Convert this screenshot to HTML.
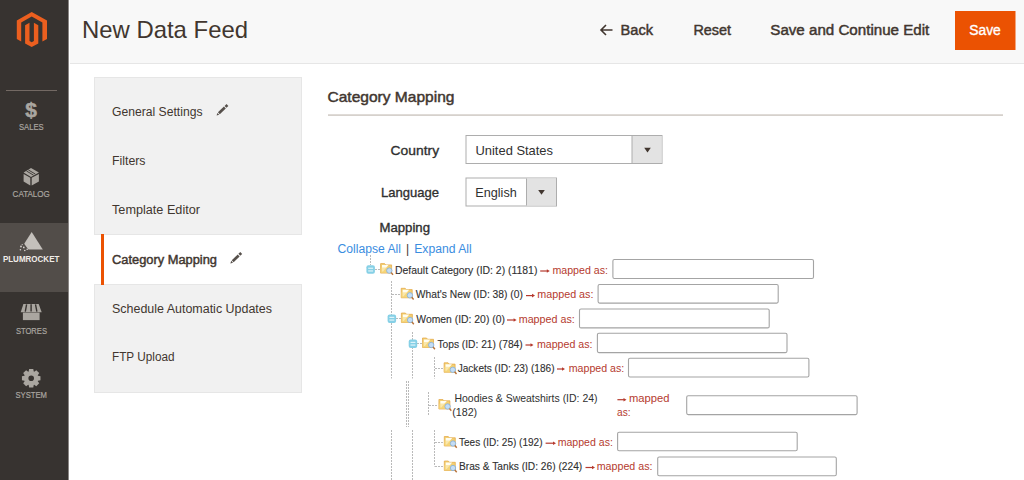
<!DOCTYPE html>
<html><head><meta charset="utf-8"><style>
html,body{margin:0;padding:0;width:1024px;height:480px;overflow:hidden;background:#fff}
svg{display:block}
text{font-family:"Liberation Sans", sans-serif}
</style></head><body>
<svg width="1024" height="480" viewBox="0 0 1024 480">
<rect x="0" y="0" width="1024" height="480" fill="#ffffff"/>
<rect x="70" y="0" width="954" height="63" fill="#f8f8f8"/>
<rect x="70" y="63" width="954" height="1" fill="#e6e6e6"/>
<rect x="0" y="0" width="68" height="480" fill="#373330"/>
<rect x="68" y="0" width="1" height="480" fill="#8a8684"/>
<rect x="0" y="223" width="68" height="69" fill="#524d49"/>
<rect x="6" y="90" width="51" height="1" fill="#736963"/>
<path fill="#eb5f1f" d="M31.7,11.9 L47,20.5 L47,39 L42.4,41.5 L42.4,22.6 L31.7,16.6 L21.2,22.6 L21.2,41.5 L16.8,39 L16.8,20.5 Z"/>
<path fill="#eb5f1f" d="M25.1,25.2 L29.5,22.7 L29.5,41 L31.7,42.3 L33.9,41 L33.9,22.7 L38.3,25.2 L38.3,43.5 L31.7,47 L25.1,43.5 Z"/>
<text x="25.2" y="116.5" font-size="21" font-weight="700" fill="#aaa6a0" stroke="#aaa6a0" stroke-width="0.5">$</text>
<text x="19" y="129.9" font-size="9.5" font-weight="400" fill="#aaa6a0" textLength="24.6" lengthAdjust="spacingAndGlyphs" stroke="#aaa6a0" stroke-width="0.2">SALES</text>
<path fill="#aaa6a0" d="M31,167.9 L38.9,172.6 L31,177 L23.6,172.6 Z"/>
<path fill="#aaa6a0" d="M23.6,174 L30.3,177.8 L30.3,185.4 L23.6,181.5 Z"/>
<path fill="#aaa6a0" d="M38.9,174 L31.7,177.8 L31.7,185.4 L38.9,181.5 Z"/>
<path stroke="#373330" stroke-width="0.9" fill="none" d="M26.5,171 L33.6,175.2 M28.3,169.9 L35.4,174.1"/>
<text x="12.6" y="196.7" font-size="9.5" font-weight="400" fill="#aaa6a0" textLength="37.2" lengthAdjust="spacingAndGlyphs" stroke="#aaa6a0" stroke-width="0.2">CATALOG</text>
<path fill="#c4c0bb" d="M31.7,232.1 L42.8,249.6 L28.5,249.6 L26.5,247 L24.2,243.8 Z"/>
<circle cx="21" cy="246.5" r="0.9" fill="#d6d2ce"/>
<circle cx="23.8" cy="247.4" r="0.85" fill="#d6d2ce"/>
<circle cx="20.4" cy="249.7" r="0.8" fill="#d6d2ce"/>
<circle cx="24.8" cy="250.5" r="0.8" fill="#d6d2ce"/>
<circle cx="27.2" cy="249.2" r="0.8" fill="#d6d2ce"/>
<circle cx="22.2" cy="244.6" r="0.6" fill="#d6d2ce"/>
<text x="2.9" y="262.3" font-size="9.5" font-weight="700" fill="#f0ece8" textLength="56.5" lengthAdjust="spacingAndGlyphs">PLUMROCKET</text>
<path fill="#aaa6a0" d="M23.4,303.9 L38.7,303.9 L41.7,312.2 L20.7,312.2 Z"/>
<path stroke="#373330" stroke-width="1.4" d="M26.6,304.3 L25.3,311.6 M31.1,304.3 L31.1,311.6 M35.5,304.3 L36.9,311.6"/>
<rect x="22.9" y="312.6" width="16.7" height="7.5" fill="#aaa6a0"/>
<text x="15.9" y="333.6" font-size="9.5" font-weight="400" fill="#aaa6a0" textLength="31.1" lengthAdjust="spacingAndGlyphs" stroke="#aaa6a0" stroke-width="0.2">STORES</text>
<path fill="#aaa6a0" fill-rule="evenodd" d="M37.94,375.66 L40.47,376.13 L40.47,380.27 L37.94,380.74 L37.76,381.17 L39.22,383.29 L36.29,386.22 L34.17,384.76 L33.74,384.94 L33.27,387.47 L29.13,387.47 L28.66,384.94 L28.23,384.76 L26.11,386.22 L23.18,383.29 L24.64,381.17 L24.46,380.74 L21.93,380.27 L21.93,376.13 L24.46,375.66 L24.64,375.23 L23.18,373.11 L26.11,370.18 L28.23,371.64 L28.66,371.46 L29.13,368.93 L33.27,368.93 L33.74,371.46 L34.17,371.64 L36.29,370.18 L39.22,373.11 L37.76,375.23 Z M34.0,378.2 A2.8,2.8 0 1 0 28.4,378.2 A2.8,2.8 0 1 0 34.0,378.2 Z"/>
<text x="15.5" y="398.3" font-size="9.5" font-weight="400" fill="#aaa6a0" textLength="31.5" lengthAdjust="spacingAndGlyphs" stroke="#aaa6a0" stroke-width="0.2">SYSTEM</text>
<text x="82" y="37.9" font-size="24" font-weight="400" fill="#41362f" textLength="166" lengthAdjust="spacingAndGlyphs">New Data Feed</text>
<path stroke="#41362f" stroke-width="1.6" fill="none" d="M612.5,30 L601,30 M606,25 L601,30 L606,35"/>
<text x="620.5" y="35" font-size="14" font-weight="400" fill="#41362f" textLength="32.5" lengthAdjust="spacingAndGlyphs" stroke="#41362f" stroke-width="0.45">Back</text>
<text x="693.5" y="35" font-size="14" font-weight="400" fill="#41362f" textLength="37.5" lengthAdjust="spacingAndGlyphs" stroke="#41362f" stroke-width="0.45">Reset</text>
<text x="770.3" y="35" font-size="14" font-weight="400" fill="#41362f" textLength="159" lengthAdjust="spacingAndGlyphs" stroke="#41362f" stroke-width="0.45">Save and Continue Edit</text>
<rect x="955" y="11" width="60.5" height="39" fill="#eb5202"/>
<text x="969.3" y="35" font-size="14" font-weight="400" fill="#ffffff" textLength="31.5" lengthAdjust="spacingAndGlyphs" stroke="#ffffff" stroke-width="0.35">Save</text>
<rect x="94.5" y="77.5" width="207" height="157" fill="#f1f1f1" stroke="#e6e6e6"/>
<rect x="94.5" y="284.5" width="207" height="108" fill="#f1f1f1" stroke="#e6e6e6"/>
<rect x="101" y="234" width="3" height="51" fill="#eb5202"/>
<text x="112" y="115.8" font-size="12.5" font-weight="400" fill="#41362f" textLength="90.5" lengthAdjust="spacingAndGlyphs">General Settings</text>
<text x="112" y="164.7" font-size="12.5" font-weight="400" fill="#41362f" textLength="33.5" lengthAdjust="spacingAndGlyphs">Filters</text>
<text x="112" y="214" font-size="12.5" font-weight="400" fill="#41362f" textLength="88" lengthAdjust="spacingAndGlyphs">Template Editor</text>
<text x="112" y="263.7" font-size="12.5" font-weight="400" fill="#41362f" textLength="105" lengthAdjust="spacingAndGlyphs" stroke="#41362f" stroke-width="0.45">Category Mapping</text>
<text x="112" y="313" font-size="12.5" font-weight="400" fill="#41362f" textLength="160" lengthAdjust="spacingAndGlyphs">Schedule Automatic Updates</text>
<text x="112" y="361.2" font-size="12.5" font-weight="400" fill="#41362f" textLength="62.5" lengthAdjust="spacingAndGlyphs">FTP Upload</text>
<g transform="translate(216.8,115.3) rotate(-44)" fill="#56504b"><path d="M-0.3,0 L2.1,-1.3 L2.1,1.3 Z"/><rect x="2.9" y="-1.35" width="8.3" height="2.7"/><rect x="12.1" y="-1.35" width="2.7" height="2.7"/></g>
<g transform="translate(230.6,263.2) rotate(-44)" fill="#56504b"><path d="M-0.3,0 L2.1,-1.3 L2.1,1.3 Z"/><rect x="2.9" y="-1.35" width="8.3" height="2.7"/><rect x="12.1" y="-1.35" width="2.7" height="2.7"/></g>
<text x="327.5" y="101.7" font-size="14.5" font-weight="400" fill="#41362f" textLength="127" lengthAdjust="spacingAndGlyphs" stroke="#41362f" stroke-width="0.45">Category Mapping</text>
<rect x="328" y="114.3" width="675" height="1.6" fill="#d2ccc7"/>
<text x="390.6" y="154.7" font-size="13.5" font-weight="400" fill="#303030" textLength="48.5" lengthAdjust="spacingAndGlyphs" stroke="#303030" stroke-width="0.35">Country</text>
<rect x="466" y="135.5" width="196" height="28" fill="#fff" stroke="#adadad"/>
<rect x="632" y="136" width="29.5" height="27" fill="#e3e3e3"/>
<rect x="631.5" y="136" width="1" height="27" fill="#adadad"/>
<path fill="#41362f" d="M644.2,147.7 L650.8,147.7 L647.5,152.5 Z"/>
<text x="475.5" y="154.7" font-size="13.3" font-weight="400" fill="#303030" textLength="77.5" lengthAdjust="spacingAndGlyphs">United States</text>
<text x="381" y="197.1" font-size="13.5" font-weight="400" fill="#303030" textLength="58" lengthAdjust="spacingAndGlyphs" stroke="#303030" stroke-width="0.35">Language</text>
<rect x="466" y="178" width="90.5" height="28" fill="#fff" stroke="#adadad"/>
<rect x="526.5" y="178.5" width="29.5" height="27" fill="#e3e3e3"/>
<rect x="526" y="178.5" width="1" height="27" fill="#adadad"/>
<path fill="#41362f" d="M538.2,190 L544.8,190 L541.5,194.8 Z"/>
<text x="475.3" y="197.1" font-size="13.3" font-weight="400" fill="#303030" textLength="41.5" lengthAdjust="spacingAndGlyphs">English</text>
<text x="379.5" y="232" font-size="12" font-weight="400" fill="#303030" textLength="50.5" lengthAdjust="spacingAndGlyphs" stroke="#303030" stroke-width="0.35">Mapping</text>
<text x="337.5" y="252.5" font-size="12" font-weight="400" fill="#3a8ddf" textLength="63.5" lengthAdjust="spacingAndGlyphs">Collapse All</text>
<text x="406" y="252.5" font-size="12" font-weight="400" fill="#41362f">|</text>
<text x="414.2" y="252.5" font-size="12" font-weight="400" fill="#3a8ddf" textLength="57.5" lengthAdjust="spacingAndGlyphs">Expand All</text>
<line x1="370.5" y1="255" x2="370.5" y2="265" stroke="#bababa" stroke-width="1" stroke-dasharray="2,1"/>
<line x1="391.5" y1="281" x2="391.5" y2="378.5" stroke="#bababa" stroke-width="1" stroke-dasharray="2,1"/>
<line x1="391.5" y1="430" x2="391.5" y2="480" stroke="#bababa" stroke-width="1" stroke-dasharray="2,1"/>
<line x1="412.5" y1="332" x2="412.5" y2="378.5" stroke="#bababa" stroke-width="1" stroke-dasharray="2,1"/>
<line x1="412.5" y1="430" x2="412.5" y2="480" stroke="#bababa" stroke-width="1" stroke-dasharray="2,1"/>
<line x1="434.5" y1="357" x2="434.5" y2="378.5" stroke="#bababa" stroke-width="1" stroke-dasharray="2,1"/>
<line x1="434.5" y1="430" x2="434.5" y2="466.5" stroke="#bababa" stroke-width="1" stroke-dasharray="2,1"/>
<line x1="406.5" y1="381" x2="406.5" y2="427" stroke="#bababa" stroke-width="1" stroke-dasharray="2,1"/>
<line x1="408.5" y1="381" x2="408.5" y2="427" stroke="#bababa" stroke-width="1" stroke-dasharray="2,1"/>
<line x1="428.5" y1="392" x2="428.5" y2="415" stroke="#bababa" stroke-width="1" stroke-dasharray="2,1"/>
<line x1="375" y1="269.5" x2="380" y2="269.5" stroke="#bababa" stroke-width="1" stroke-dasharray="2,1"/>
<line x1="392" y1="294.5" x2="400" y2="294.5" stroke="#bababa" stroke-width="1" stroke-dasharray="2,1"/>
<line x1="396" y1="318.5" x2="401" y2="318.5" stroke="#bababa" stroke-width="1" stroke-dasharray="2,1"/>
<line x1="417" y1="343.5" x2="422" y2="343.5" stroke="#bababa" stroke-width="1" stroke-dasharray="2,1"/>
<line x1="435" y1="368.5" x2="443" y2="368.5" stroke="#bababa" stroke-width="1" stroke-dasharray="2,1"/>
<line x1="429" y1="405.5" x2="438" y2="405.5" stroke="#bababa" stroke-width="1" stroke-dasharray="2,1"/>
<line x1="435" y1="442.5" x2="443" y2="442.5" stroke="#bababa" stroke-width="1" stroke-dasharray="2,1"/>
<line x1="435" y1="466.5" x2="443" y2="466.5" stroke="#bababa" stroke-width="1" stroke-dasharray="2,1"/>
<g transform="translate(366.4,265.3)"><rect x="0" y="0" width="8.5" height="8.5" rx="2" fill="#86d0e6"/><rect x="1.8" y="2.4" width="4.9" height="1.1" fill="#e8f7fb"/><rect x="1.8" y="5.1" width="4.9" height="1.1" fill="#e8f7fb"/></g>
<g transform="translate(380,262.6)"><path d="M0.6,1 h4 l1.2,1.3 h5.8 v8.2 h-11 z" fill="#f3cf72" stroke="#e3a542" stroke-width="0.7"/><path d="M2,2.5 L8.5,2.5 L3,9 L2,9 Z" fill="#fffdf0"/><path d="M0.6,5 h11.2 l-0.3,5.5 h-10.9 z" fill="#f7d97f" opacity="0.6"/><circle cx="9.3" cy="8" r="2.7" fill="#c4ddf5" stroke="#7aa8d8" stroke-width="0.7"/><line x1="11.2" y1="10" x2="13" y2="12.2" stroke="#b8733a" stroke-width="1.4"/></g>
<text x="395.0" y="273.7" font-size="11.4" fill="#303030" stroke="#303030" stroke-width="0.12" textLength="142.39999999999998" lengthAdjust="spacingAndGlyphs">Default Category (ID: 2) (1181)</text>
<path d="M540.2,271.0 L547.3,271.0" stroke="#b53a2e" stroke-width="1.2"/><path d="M546.8,269.2 L549.8,271.0 L546.8,272.8 Z" fill="#b53a2e"/>
<text x="552.4" y="273.7" font-size="11.4" fill="#b53a2e" textLength="55.60000000000002" lengthAdjust="spacingAndGlyphs">mapped as:</text>
<rect x="612.9" y="259.5" width="200.60000000000002" height="19" rx="1.5" fill="#fff" stroke="#a4a4a4" stroke-width="1.1"/>
<g transform="translate(400.6,287.3)"><path d="M0.6,1 h4 l1.2,1.3 h5.8 v8.2 h-11 z" fill="#f3cf72" stroke="#e3a542" stroke-width="0.7"/><path d="M2,2.5 L8.5,2.5 L3,9 L2,9 Z" fill="#fffdf0"/><path d="M0.6,5 h11.2 l-0.3,5.5 h-10.9 z" fill="#f7d97f" opacity="0.6"/><circle cx="9.3" cy="8" r="2.7" fill="#c4ddf5" stroke="#7aa8d8" stroke-width="0.7"/><line x1="11.2" y1="10" x2="13" y2="12.2" stroke="#b8733a" stroke-width="1.4"/></g>
<text x="415.8" y="298.3" font-size="11.4" fill="#303030" stroke="#303030" stroke-width="0.12" textLength="107.09999999999997" lengthAdjust="spacingAndGlyphs">What's New (ID: 38) (0)</text>
<path d="M526,295.6 L532.5,295.6" stroke="#b53a2e" stroke-width="1.2"/><path d="M532,293.8 L535,295.6 L532,297.40000000000003 Z" fill="#b53a2e"/>
<text x="537.2" y="298.3" font-size="11.4" fill="#b53a2e" textLength="56.299999999999955" lengthAdjust="spacingAndGlyphs">mapped as:</text>
<rect x="598.1" y="284.5" width="180.10000000000002" height="18.600000000000023" rx="1.5" fill="#fff" stroke="#a4a4a4" stroke-width="1.1"/>
<g transform="translate(387.6,314.4)"><rect x="0" y="0" width="8.5" height="8.5" rx="2" fill="#86d0e6"/><rect x="1.8" y="2.4" width="4.9" height="1.1" fill="#e8f7fb"/><rect x="1.8" y="5.1" width="4.9" height="1.1" fill="#e8f7fb"/></g>
<g transform="translate(400.8,312)"><path d="M0.6,1 h4 l1.2,1.3 h5.8 v8.2 h-11 z" fill="#f3cf72" stroke="#e3a542" stroke-width="0.7"/><path d="M2,2.5 L8.5,2.5 L3,9 L2,9 Z" fill="#fffdf0"/><path d="M0.6,5 h11.2 l-0.3,5.5 h-10.9 z" fill="#f7d97f" opacity="0.6"/><circle cx="9.3" cy="8" r="2.7" fill="#c4ddf5" stroke="#7aa8d8" stroke-width="0.7"/><line x1="11.2" y1="10" x2="13" y2="12.2" stroke="#b8733a" stroke-width="1.4"/></g>
<text x="416.3" y="322.7" font-size="11.4" fill="#303030" stroke="#303030" stroke-width="0.12" textLength="88.59999999999997" lengthAdjust="spacingAndGlyphs">Women (ID: 20) (0)</text>
<path d="M507,320.0 L514.1,320.0" stroke="#b53a2e" stroke-width="1.2"/><path d="M513.6,318.2 L516.6,320.0 L513.6,321.8 Z" fill="#b53a2e"/>
<text x="518.7" y="322.7" font-size="11.4" fill="#b53a2e" textLength="56.09999999999991" lengthAdjust="spacingAndGlyphs">mapped as:</text>
<rect x="579.5" y="309.0" width="189.70000000000005" height="18.899999999999977" rx="1.5" fill="#fff" stroke="#a4a4a4" stroke-width="1.1"/>
<g transform="translate(408.7,339.4)"><rect x="0" y="0" width="8.5" height="8.5" rx="2" fill="#86d0e6"/><rect x="1.8" y="2.4" width="4.9" height="1.1" fill="#e8f7fb"/><rect x="1.8" y="5.1" width="4.9" height="1.1" fill="#e8f7fb"/></g>
<g transform="translate(421.9,337)"><path d="M0.6,1 h4 l1.2,1.3 h5.8 v8.2 h-11 z" fill="#f3cf72" stroke="#e3a542" stroke-width="0.7"/><path d="M2,2.5 L8.5,2.5 L3,9 L2,9 Z" fill="#fffdf0"/><path d="M0.6,5 h11.2 l-0.3,5.5 h-10.9 z" fill="#f7d97f" opacity="0.6"/><circle cx="9.3" cy="8" r="2.7" fill="#c4ddf5" stroke="#7aa8d8" stroke-width="0.7"/><line x1="11.2" y1="10" x2="13" y2="12.2" stroke="#b8733a" stroke-width="1.4"/></g>
<text x="437.4" y="347.7" font-size="11.4" fill="#303030" stroke="#303030" stroke-width="0.12" textLength="85.30000000000007" lengthAdjust="spacingAndGlyphs">Tops (ID: 21) (784)</text>
<path d="M525.5,345.0 L531.0,345.0" stroke="#b53a2e" stroke-width="1.2"/><path d="M530.5,343.2 L533.5,345.0 L530.5,346.8 Z" fill="#b53a2e"/>
<text x="536.9" y="347.7" font-size="11.4" fill="#b53a2e" textLength="55.60000000000002" lengthAdjust="spacingAndGlyphs">mapped as:</text>
<rect x="597.4" y="333.3" width="189.60000000000002" height="19.30000000000001" rx="1.5" fill="#fff" stroke="#a4a4a4" stroke-width="1.1"/>
<g transform="translate(443.5,361.8)"><path d="M0.6,1 h4 l1.2,1.3 h5.8 v8.2 h-11 z" fill="#f3cf72" stroke="#e3a542" stroke-width="0.7"/><path d="M2,2.5 L8.5,2.5 L3,9 L2,9 Z" fill="#fffdf0"/><path d="M0.6,5 h11.2 l-0.3,5.5 h-10.9 z" fill="#f7d97f" opacity="0.6"/><circle cx="9.3" cy="8" r="2.7" fill="#c4ddf5" stroke="#7aa8d8" stroke-width="0.7"/><line x1="11.2" y1="10" x2="13" y2="12.2" stroke="#b8733a" stroke-width="1.4"/></g>
<text x="457.7" y="371.7" font-size="11.4" fill="#303030" stroke="#303030" stroke-width="0.12" textLength="96.80000000000001" lengthAdjust="spacingAndGlyphs">Jackets (ID: 23) (186)</text>
<path d="M557,369.0 L562.5,369.0" stroke="#b53a2e" stroke-width="1.2"/><path d="M562,367.2 L565,369.0 L562,370.8 Z" fill="#b53a2e"/>
<text x="568.7" y="371.7" font-size="11.4" fill="#b53a2e" textLength="55.59999999999991" lengthAdjust="spacingAndGlyphs">mapped as:</text>
<rect x="628.5" y="358.3" width="180.39999999999998" height="18.69999999999999" rx="1.5" fill="#fff" stroke="#a4a4a4" stroke-width="1.1"/>
<g transform="translate(443.7,435.5)"><path d="M0.6,1 h4 l1.2,1.3 h5.8 v8.2 h-11 z" fill="#f3cf72" stroke="#e3a542" stroke-width="0.7"/><path d="M2,2.5 L8.5,2.5 L3,9 L2,9 Z" fill="#fffdf0"/><path d="M0.6,5 h11.2 l-0.3,5.5 h-10.9 z" fill="#f7d97f" opacity="0.6"/><circle cx="9.3" cy="8" r="2.7" fill="#c4ddf5" stroke="#7aa8d8" stroke-width="0.7"/><line x1="11.2" y1="10" x2="13" y2="12.2" stroke="#b8733a" stroke-width="1.4"/></g>
<text x="459.0" y="445.9" font-size="11.4" fill="#303030" stroke="#303030" stroke-width="0.12" textLength="83.5" lengthAdjust="spacingAndGlyphs">Tees (ID: 25) (192)</text>
<path d="M545.6,443.2 L553.5,443.2" stroke="#b53a2e" stroke-width="1.2"/><path d="M553,441.4 L556,443.2 L553,445.0 Z" fill="#b53a2e"/>
<text x="557.7" y="445.9" font-size="11.4" fill="#b53a2e" textLength="55.19999999999993" lengthAdjust="spacingAndGlyphs">mapped as:</text>
<rect x="617.6" y="432.2" width="179.60000000000002" height="18.5" rx="1.5" fill="#fff" stroke="#a4a4a4" stroke-width="1.1"/>
<g transform="translate(443.7,460)"><path d="M0.6,1 h4 l1.2,1.3 h5.8 v8.2 h-11 z" fill="#f3cf72" stroke="#e3a542" stroke-width="0.7"/><path d="M2,2.5 L8.5,2.5 L3,9 L2,9 Z" fill="#fffdf0"/><path d="M0.6,5 h11.2 l-0.3,5.5 h-10.9 z" fill="#f7d97f" opacity="0.6"/><circle cx="9.3" cy="8" r="2.7" fill="#c4ddf5" stroke="#7aa8d8" stroke-width="0.7"/><line x1="11.2" y1="10" x2="13" y2="12.2" stroke="#b8733a" stroke-width="1.4"/></g>
<text x="459.0" y="470.2" font-size="11.4" fill="#303030" stroke="#303030" stroke-width="0.12" textLength="123.20000000000005" lengthAdjust="spacingAndGlyphs">Bras &amp; Tanks (ID: 26) (224)</text>
<path d="M585.5,467.5 L592.5,467.5" stroke="#b53a2e" stroke-width="1.2"/><path d="M592,465.7 L595,467.5 L592,469.3 Z" fill="#b53a2e"/>
<text x="596.7" y="470.2" font-size="11.4" fill="#b53a2e" textLength="55.799999999999955" lengthAdjust="spacingAndGlyphs">mapped as:</text>
<rect x="657.7" y="457.0" width="178.5999999999999" height="18.69999999999999" rx="1.5" fill="#fff" stroke="#a4a4a4" stroke-width="1.1"/>
<g transform="translate(438.3,398.5)"><path d="M0.6,1 h4 l1.2,1.3 h5.8 v8.2 h-11 z" fill="#f3cf72" stroke="#e3a542" stroke-width="0.7"/><path d="M2,2.5 L8.5,2.5 L3,9 L2,9 Z" fill="#fffdf0"/><path d="M0.6,5 h11.2 l-0.3,5.5 h-10.9 z" fill="#f7d97f" opacity="0.6"/><circle cx="9.3" cy="8" r="2.7" fill="#c4ddf5" stroke="#7aa8d8" stroke-width="0.7"/><line x1="11.2" y1="10" x2="13" y2="12.2" stroke="#b8733a" stroke-width="1.4"/></g>
<text x="454.5" y="402.2" font-size="11.4" fill="#303030" textLength="143" lengthAdjust="spacingAndGlyphs">Hoodies &amp; Sweatshirts (ID: 24)</text>
<text x="452.2" y="416" font-size="11.4" fill="#303030" textLength="25" lengthAdjust="spacingAndGlyphs">(182)</text>
<path d="M617.4,399.7 L624.0,399.7" stroke="#b53a2e" stroke-width="1.2"/><path d="M623.5,397.9 L626.5,399.7 L623.5,401.5 Z" fill="#b53a2e"/>
<text x="629" y="402.4" font-size="11.4" fill="#b53a2e" textLength="40.5" lengthAdjust="spacingAndGlyphs">mapped</text>
<text x="617" y="415.6" font-size="11.4" fill="#b53a2e" textLength="13.5" lengthAdjust="spacingAndGlyphs">as:</text>
<rect x="686.7" y="395.8" width="170.39999999999998" height="18.80000000000001" rx="1.5" fill="#fff" stroke="#a4a4a4" stroke-width="1.1"/>
</svg>
</body></html>
